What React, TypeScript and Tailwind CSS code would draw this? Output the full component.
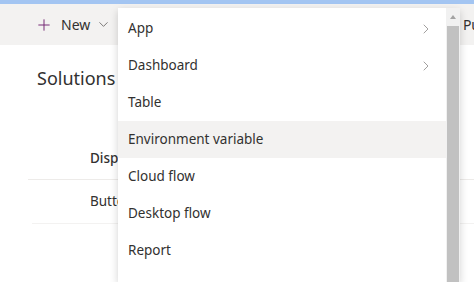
import { ChevronDown, ChevronRight, Plus } from "lucide-react";

const items = [
  { label: "App", sub: true },
  { label: "Dashboard", sub: true },
  { label: "Table" },
  { label: "Environment variable", active: true },
  { label: "Cloud flow" },
  { label: "Desktop flow" },
  { label: "Report" },
];

export default function App() {
  return (
    <div
      className="relative h-[282px] w-[474px] overflow-hidden bg-white text-[#323130]"
      style={{ fontFamily: '"Noto Sans", "Open Sans", sans-serif' }}
    >
      {/* TOP STRIP */}
      <div className="h-[4px] bg-[#a3c5f2]" />

      {/* COMMAND BAR */}
      <div className="flex h-[41px] items-center justify-between bg-[#f3f2f1] pl-[35px]">
        <div className="flex items-center">
          <Plus className="h-[18px] w-[18px] text-[#742774]" strokeWidth={1.3} />
          <span className="ml-[8px] text-[14px]">New</span>
          <ChevronDown className="ml-[6px] h-[15px] w-[15px] text-[#605e5c]" strokeWidth={1.3} />
        </div>
        <span className="-mr-[6px] text-[14px]">Pu</span>
      </div>

      {/* PAGE CONTENT */}
      <div className="pl-[28px] pt-[20px]">
        <h1 className="ml-[9px] text-[18px] leading-[26px]">Solutions</h1>
        <div className="mt-[47px] flex h-[42px] items-center border-b border-[#edebe9] pl-[62px] text-[13.5px] font-medium">
          Display name
        </div>
        <div className="ml-[4px] flex h-[44px] items-center border-b border-[#f3f2f1] pl-[58px] text-[13.5px]">
          Button
        </div>
      </div>

      {/* NEW MENU */}
      <div className="absolute bottom-0 left-[118px] top-[8px] flex w-[342px] bg-white shadow-[0_3px_8px_rgba(0,0,0,0.18)]">
        <ul className="flex-1 pt-[2px]">
          {items.map((it) => (
            <li
              key={it.label}
              className={
                "flex h-[37px] items-center justify-between pl-[10px] pr-[12px] text-[13.5px] " +
                (it.active ? "bg-[#f3f2f1]" : "")
              }
            >
              <span>{it.label}</span>
              {it.sub && <ChevronRight className="h-[16px] w-[16px] text-[#8a8886]" strokeWidth={1.2} />}
            </li>
          ))}
        </ul>

        {/* SCROLLBAR */}
        <div className="flex w-[14px] flex-col bg-[#f1f1f1]">
          <div className="flex h-[18px] items-center justify-center">
            <div className="h-0 w-0 border-x-[3px] border-b-[4px] border-x-transparent border-b-[#a3a3a3]" />
          </div>
          <div className="mx-[1px] flex-1 bg-[#c1c1c1]" />
        </div>
      </div>
    </div>
  );
}
